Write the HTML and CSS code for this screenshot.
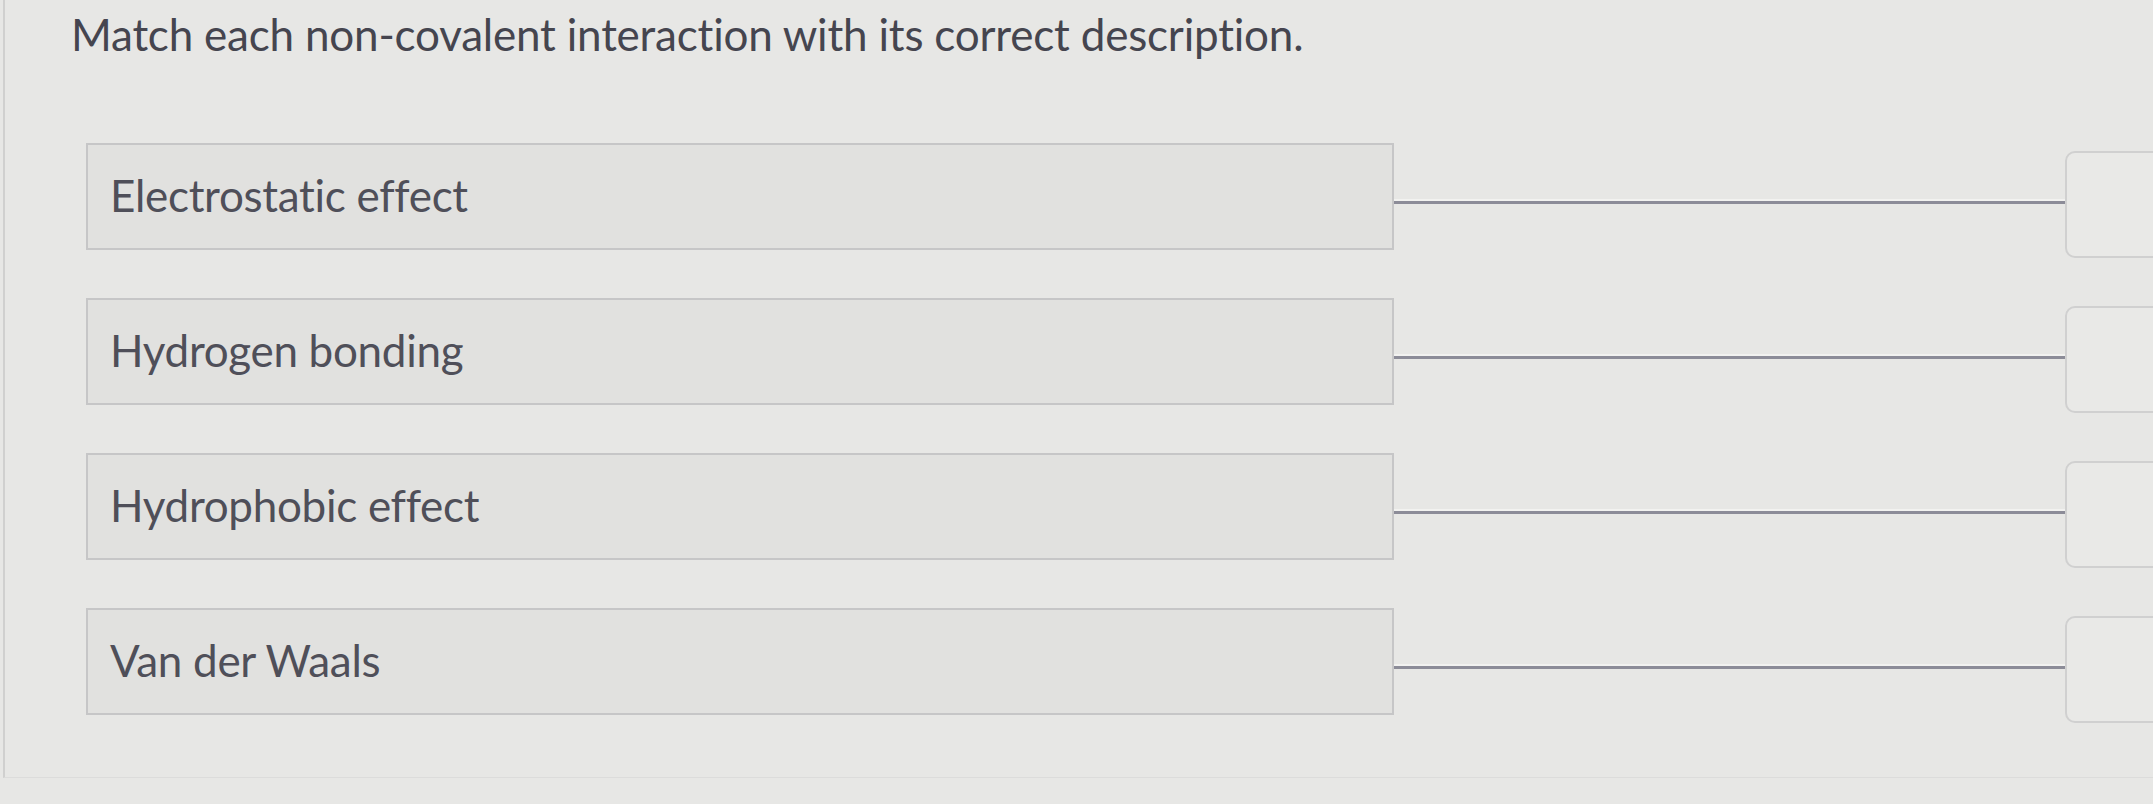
FILE: index.html
```html
<!DOCTYPE html>
<html lang="en">
<head>
<meta charset="utf-8">
<title>Match non-covalent interactions</title>
<link rel="stylesheet" href="styles.css">
</head>
<body>
<main class="page">
  <h1 class="prompt">Match each non-covalent interaction with its correct description.</h1>
  <ul class="rows">
    <li class="row">
      <div class="term">Electrostatic effect</div>
      <div class="wire"></div>
      <div class="slot"></div>
    </li>
    <li class="row">
      <div class="term">Hydrogen bonding</div>
      <div class="wire"></div>
      <div class="slot"></div>
    </li>
    <li class="row">
      <div class="term">Hydrophobic effect</div>
      <div class="wire"></div>
      <div class="slot"></div>
    </li>
    <li class="row">
      <div class="term">Van der Waals</div>
      <div class="wire"></div>
      <div class="slot"></div>
    </li>
  </ul>
</main>
</body>
</html>
```
FILE: styles.css
```css
html, body {
  margin: 0;
  padding: 0;
  width: 2153px;
  height: 804px;
  overflow: hidden;
  background: #e7e7e5;
}

.page {
  box-sizing: border-box;
  width: 2160px;
  height: 778px;
  margin-left: 3px;
  border-left: 2px solid #d0d0cf;
  border-bottom: 1px solid #dcdcdb;
  font-family: Lato, "Open Sans", sans-serif;
  color: #50505a;
}

.prompt {
  margin: 0;
  padding: 8px 0 0 66px;
  font-size: 44px;
  font-weight: 400;
  line-height: 52px;
  color: #45454f;
  letter-spacing: -0.2px;
}

.rows {
  list-style: none;
  margin: 0;
  padding: 83px 0 0 81px;
  display: flex;
  flex-direction: column;
  gap: 48px;
}

.row {
  display: flex;
  align-items: center;
  height: 107px;
}

.term {
  box-sizing: border-box;
  flex: 0 0 1308px;
  height: 107px;
  display: flex;
  align-items: center;
  padding: 0 0 4px 22px;
  background: #e1e1df;
  border: 2px solid #c6c6c7;
  font-size: 44px;
  letter-spacing: -0.3px;
  color: #4f4f59;
}

.wire {
  flex: 0 0 671px;
  height: 3px;
  margin-top: 10px;
  background: #8c8c98;
  border-top: 2px solid #f2f2f0;
}

.slot {
  box-sizing: border-box;
  flex: 0 0 110px;
  height: 107px;
  margin-top: 16px;
  border: 2px solid #d0d0d0;
  border-radius: 10px;
  background: #e9e9e7;
}
```
